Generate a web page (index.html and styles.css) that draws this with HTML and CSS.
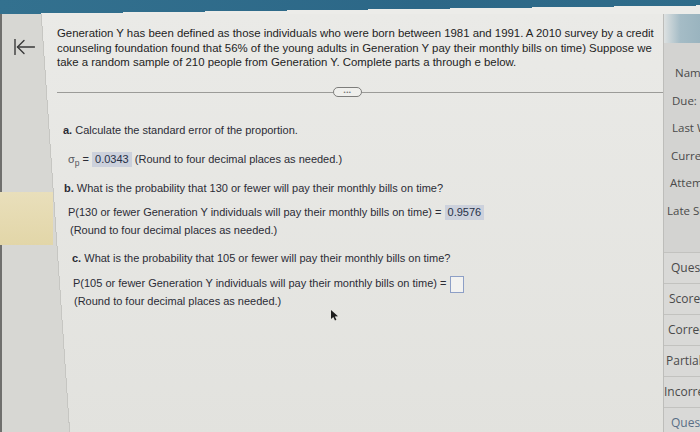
FILE: index.html
```html
<!DOCTYPE html>
<html lang="en">
<head>
<meta charset="utf-8">
<title>Generation Y</title>
<link rel="stylesheet" href="styles.css">
</head>
<body>
<div class="screen">
  <div class="topbar"></div>
  <div class="layout">
    <aside class="leftcol">
      <svg class="back" width="21" height="16" viewBox="0 0 21 16" aria-hidden="true">
        <path d="M1 0.5V15.5" />
        <path d="M3.5 8H20.5" />
        <path d="M10 1.5L3.5 8L10 14.5" />
      </svg>
      <div class="mark"></div>
    </aside>
    <main class="main">
      <p class="intro">Generation Y has been defined as those individuals who were born between 1981 and 1991. A 2010 survey by a credit<br>counseling foundation found that 56% of the young adults in Generation Y pay their monthly bills on time) Suppose we<br>take a random sample of 210 people from Generation Y. Complete parts a through e below.</p>
      <div class="divider"><span class="rule rule-l"></span><span class="pill">•••</span><span class="rule rule-r"></span></div>
      <div class="parts">
        <p class="q qa"><b>a.</b> Calculate the standard error of the proportion.</p>
        <p class="ans ansa"><span class="sym">σ<sub>p</sub></span> = <span class="filled">0.0343</span> (Round to four decimal places as needed.)</p>
        <p class="q qb"><b>b.</b> What is the probability that 130 or fewer will pay their monthly bills on time?</p>
        <p class="ans ansb">P(130 or fewer Generation Y individuals will pay their monthly bills on time) = <span class="filled">0.9576</span></p>
        <p class="note noteb">(Round to four decimal places as needed.)</p>
        <p class="q qc"><b>c.</b> What is the probability that 105 or fewer will pay their monthly bills on time?</p>
        <p class="ans ansc">P(105 or fewer Generation Y individuals will pay their monthly bills on time) = <span class="empty"></span></p>
        <p class="note notec">(Round to four decimal places as needed.)</p>
      </div>
      <svg class="cursor" width="9" height="12" viewBox="0 0 9 12" aria-hidden="true">
        <path d="M1 1L1 10L3.3 8L5 11.5L6.4 10.8L4.8 7.4L8 7.2Z" />
      </svg>
    </main>
    <aside class="rightcol">
      <div class="rc-top"></div>
      <ul class="meta">
        <li class="m1">Name:</li>
        <li class="m2">Due:</li>
        <li class="m3">Last Worked:</li>
        <li class="m4">Current Score:</li>
        <li class="m5">Attempts:</li>
        <li class="m6">Late Submission:</li>
      </ul>
      <ul class="stats">
        <li class="s1">Question Value:</li>
        <li class="s2">Score:</li>
        <li class="s3">Correct:</li>
        <li class="s4">Partial:</li>
        <li class="s5">Incorrect:</li>
        <li class="s6">Questions:</li>
      </ul>
    </aside>
  </div>
</div>
</body>
</html>
```

FILE: styles.css
```css
html, body {
  margin: 0;
  padding: 0;
}
body {
  width: 700px;
  height: 432px;
  overflow: hidden;
  background: #e8e8e4;
  font-family: "Liberation Sans", Arial, sans-serif;
}
.screen {
  width: 700px;
  height: 432px;
  display: flex;
  flex-direction: column;
  overflow: hidden;
}
.topbar {
  height: 14px;
  flex: none;
  background:
    linear-gradient(179.3deg, rgba(0,0,0,0) 14px, #ecece9 14px),
    linear-gradient(90deg, #33718f, #2c6787 60%, #2f6c8a);
}
.layout {
  flex: 1;
  display: flex;
  border-left: 2px solid #6f6f6d;
  background:
    linear-gradient(86.1deg, #d7d7d3 67.4px, #c6c6c2 67.4px, #c6c6c2 68.4px, rgba(0,0,0,0) 68.4px),
    linear-gradient(180deg, #eaeae7, #e2e2de);
}
.leftcol {
  width: 40px;
  flex: none;
  display: flex;
  flex-direction: column;
}
.back {
  margin: 25px 0 0 12px;
  fill: none;
  stroke: #3a3a3a;
  stroke-width: 1.4;
  stroke-linecap: round;
  stroke-linejoin: round;
}
.mark {
  width: 53px;
  height: 53px;
  margin-top: 137px;
  margin-left: -2px;
  background: linear-gradient(180deg, #e9dfbb, #e2d6a8);
}
.main {
  flex: 1;
  position: relative;
  display: flex;
  flex-direction: column;
  color: #232323;
}
.intro {
  margin: 12px 0 0 15px;
  font-size: 11.4px;
  line-height: 14.5px;
  white-space: nowrap;
}
.divider {
  margin-top: 17.5px;
  margin-left: 15px;
  height: 10px;
  display: flex;
  align-items: center;
}
.rule {
  height: 1px;
  background: #9b9b98;
}
.rule-l {
  width: 276px;
}
.rule-r {
  flex: 1;
}
.pill {
  width: 27px;
  height: 8px;
  border: 1px solid #7d7d7b;
  border-radius: 5px;
  background: #efefec;
  color: #777;
  font-size: 6px;
  line-height: 8px;
  text-align: center;
  letter-spacing: 0.5px;
}
.parts {
  display: flex;
  flex-direction: column;
  color: #2b2c36;
  font-size: 11px;
}
.parts p {
  margin: 0;
  white-space: nowrap;
}
.q, .note {
  line-height: 14px;
}
.ans {
  line-height: 17px;
}
.qa { margin-top: 26px !important; padding-left: 21px; }
.ansa { margin-top: 13.5px !important; padding-left: 26px; }
.qb { margin-top: 13.5px !important; padding-left: 22px; }
.ansb { margin-top: 8.5px !important; padding-left: 26px; }
.noteb { margin-top: 2px !important; padding-left: 28px; }
.qc { margin-top: 14.5px !important; padding-left: 30px; }
.ansc { margin-top: 10px !important; padding-left: 31px; }
.notec { margin-top: 1px !important; padding-left: 32px; }
.sym {
  color: #55565e;
}
.sym sub {
  font-size: 8.5px;
  vertical-align: -3px;
  line-height: 0;
}
.filled {
  display: inline-block;
  height: 15px;
  line-height: 15px;
  padding: 0 3px;
  vertical-align: middle;
  background: #ccd1dc;
  color: #273046;
}
.empty {
  display: inline-block;
  width: 12px;
  height: 15px;
  vertical-align: middle;
  border: 1px solid #8d9fc6;
  background: #f2f2f0;
}
.cursor {
  position: absolute;
  left: 288px;
  top: 295px;
  fill: #1d1d1d;
}
.rightcol {
  width: 36px;
  flex: none;
  display: flex;
  flex-direction: column;
  background: #d3d3d1;
  border-left: 1px solid #bdbdba;
  font-family: "Open Sans", "DejaVu Sans", sans-serif;
  font-size: 11.5px;
  color: #4a4a4a;
  overflow: hidden;
}
.rc-top {
  height: 29px;
  flex: none;
  background: linear-gradient(90deg, #dde1e1, #a5bcc6 45%, #9ab4bf);
}
.meta, .stats {
  list-style: none;
  margin: 0;
  padding: 0;
}
.meta {
  margin-top: 16px;
}
.meta li {
  height: 27.5px;
  line-height: 27.5px;
  white-space: nowrap;
}
.m1 { padding-left: 11px; }
.m2 { padding-left: 8px; }
.m3 { padding-left: 8px; }
.m4 { padding-left: 7px; }
.m5 { padding-left: 6px; }
.m6 { padding-left: 3px; }
.stats {
  margin-top: 28px;
  background: #d9d9d7;
}
.stats li {
  height: 30px;
  line-height: 30px;
  border-top: 1px solid #c2c2bf;
  white-space: nowrap;
  font-size: 12px;
}
.s1 { padding-left: 7px; }
.s2 { padding-left: 5px; }
.s3 { padding-left: 4px; }
.s4 { padding-left: 2px; }
.s5 { padding-left: 0; }
.s6 { padding-left: 7px; color: #5a6f86; }
```
